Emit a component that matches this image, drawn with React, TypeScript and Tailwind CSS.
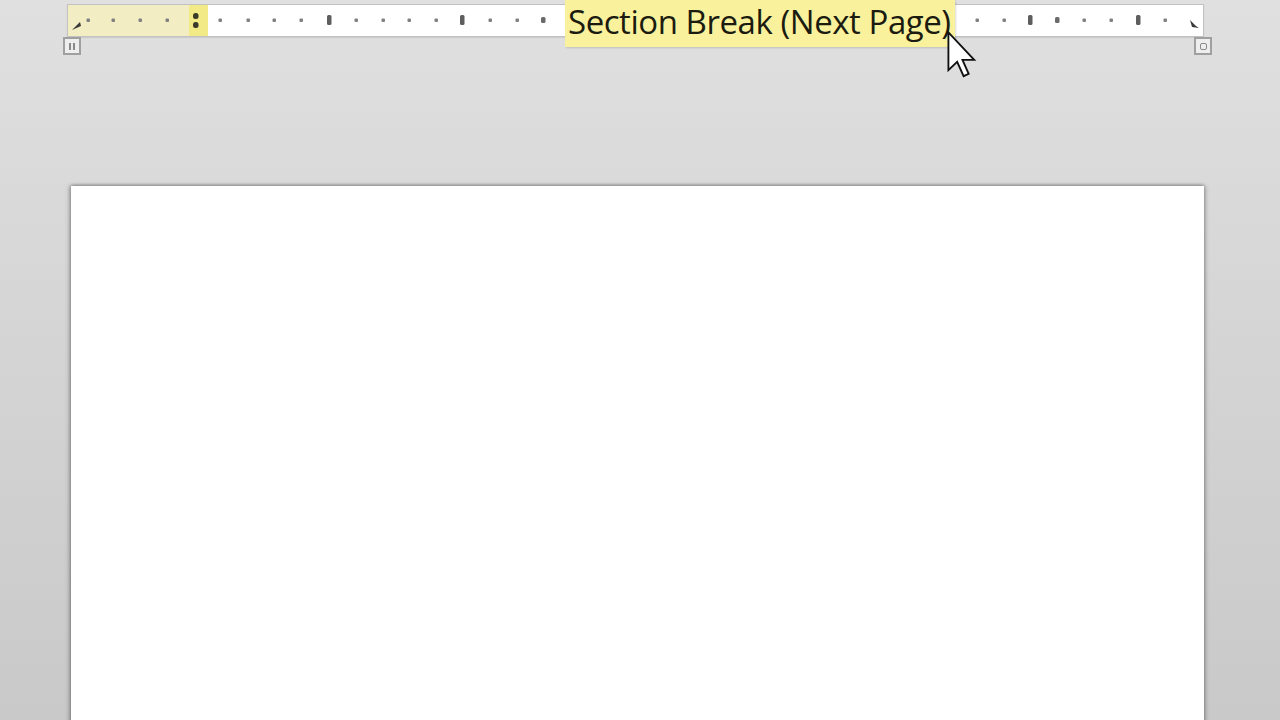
import React from "react";

const small = [88, 113, 140, 167, 220, 248, 274, 301, 356, 383, 409, 436, 490, 517, 977, 1004, 1084, 1111, 1165];
const big = [329, 462, 1030, 1138];
const med = [543, 1057];

function Ruler() {
  return (
    <svg width="1280" height="48" className="block" viewBox="0 0 1280 48">
      {small.map((x) => (
        <rect key={"s" + x} x={x - 1.5} y={18.5} width={3.5} height={3.5} rx={1} fill="#808080" />
      ))}
      {med.map((x) => (
        <rect key={"m" + x} x={x - 2} y={17} width={4.5} height={6} rx={1.5} fill="#6a6a6a" />
      ))}
      {big.map((x) => (
        <rect key={"b" + x} x={x - 2} y={15} width={4.5} height={10} rx={1.5} fill="#5e5e5e" />
      ))}
      <rect x={193} y={13} width={5.5} height={6} rx={2.5} fill="#3a3a2a" />
      <rect x={193} y={22} width={5.5} height={6} rx={2.5} fill="#3a3a2a" />
      <path d="M72 30 L80 22 L81 26 Z" fill="#3a3a3a" />
      <path d="M1190 20 L1196 26 L1199 28 L1192 27 Z" fill="#3a3a3a" />
    </svg>
  );
}

export default function App() {
  return (
    <div
      className="relative w-[1280px] h-[720px] overflow-hidden bg-gradient-to-b from-[#e0e0e0] via-[#d4d4d4] to-[#c9c9c9]"
      style={{ fontFamily: "'Open Sans', 'Noto Sans', sans-serif" }}
    >
      <div className="h-[186px] relative">
        <div className="pt-[4px] pl-[67px] pr-[76px]">
          <div className="flex h-[33px] border border-[#c2c2c2] shadow-[0_1px_1px_rgba(0,0,0,0.08)]">
            <div className="w-[121px] bg-[#f2edc3]" />
            <div className="w-[19px] bg-[#f1ea86]" />
            <div className="flex-1 bg-white" />
          </div>
        </div>
        <div className="absolute left-0 top-0 pointer-events-none">
          <Ruler />
        </div>
        <div className="absolute left-[63px] top-[37px] w-[18px] h-[18px] border-2 border-[#a0a0a0] bg-[#eeeeee] flex items-center justify-center gap-[2px]">
          <div className="w-[2px] h-[7px] bg-[#8a8a8a]" />
          <div className="w-[2px] h-[7px] bg-[#8a8a8a]" />
        </div>
        <div className="absolute left-[1194px] top-[37px] w-[18px] h-[18px] border-2 border-[#a0a0a0] bg-[#eeeeee] flex items-center justify-center">
          <div className="w-[7px] h-[7px] rounded-[2px] border border-[#8a8a8a]" />
        </div>
        <div className="absolute left-[565px] top-0 w-[390px] h-[47px] bg-[#f9f19c] flex items-center pl-[3px] shadow-[1px_1px_2px_rgba(0,0,0,0.15)]">
          <span className="text-[33px] font-medium leading-none text-[#1b1b10] tracking-[-0.45px] whitespace-nowrap -mt-[5px]">
            Section Break (Next Page)
          </span>
        </div>
        <svg
          className="absolute left-[947px] top-[31px]"
          width="30"
          height="47"
          viewBox="0 0 13 20.4"
        >
          <path
            d="M0.6 0.6 L0.6 17 L4.4 13.4 L7.2 19.6 L9.4 18.6 L6.7 12.5 L11.8 12.5 Z"
            fill="#ffffff"
            stroke="#111111"
            strokeWidth="0.8"
            strokeLinejoin="miter"
          />
        </svg>
      </div>
      <div className="ml-[71px] w-[1133px] h-[560px] bg-white shadow-[-2px_0_4px_rgba(0,0,0,0.25),2px_0_4px_rgba(0,0,0,0.2),0_-1px_3px_rgba(0,0,0,0.2)]" />
    </div>
  );
}
